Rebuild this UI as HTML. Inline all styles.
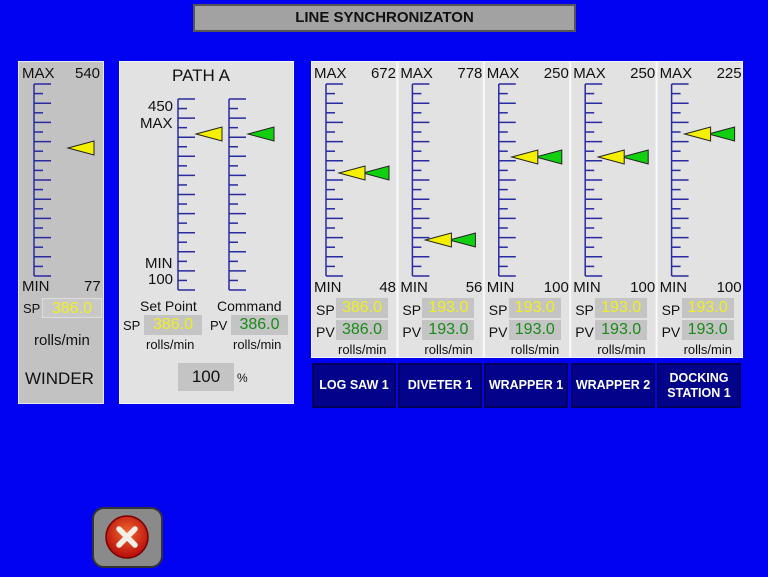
<!DOCTYPE html>
<html><head><meta charset="utf-8"><style>
*{margin:0;padding:0;box-sizing:border-box}
body{width:768px;height:577px;background:#0202f2;position:relative;overflow:hidden;font-family:"Liberation Sans",Arial,sans-serif;color:#111}
.a{position:absolute}
.t{position:absolute;font-size:15px;line-height:16px;white-space:nowrap}
.box{position:absolute;background:#c4c4c4;font-size:16px;line-height:20px;text-align:center;height:20px}
.y{color:#f0f020}.g{color:#1a8a1a}
.btn{position:absolute;top:363px;height:45px;width:84px;background:#02028a;border:2px solid #00005a;color:#fff;font-weight:bold;font-size:12.5px;display:flex;align-items:center;justify-content:center;text-align:center;line-height:15px}
</style></head><body>
<div class="a" style="left:193px;top:4px;width:383px;height:28px;background:#a2a2a2;border:2px solid #555;text-align:center;font-weight:bold;font-size:15px;line-height:24px">LINE SYNCHRONIZATON</div>

<div class="a" style="left:18px;top:61px;width:86px;height:343px;background:#c2c2c2;border:1px solid #e8e8e8"></div>
<div class="a" style="left:119px;top:61px;width:175px;height:343px;background:#e2e2e2;border:1px solid #f4f4f4"></div>
<div class="a" style="left:311px;top:61px;width:432px;height:297px;background:#e2e2e2;border:1px solid #f4f4f4"></div>

<svg class="a" style="left:0;top:0" width="768" height="577" id="s"></svg>

<div class="t" style="left:22px;top:66px">MAX</div><div class="t" style="left:75px;top:66px">540</div>
<div class="t" style="left:22px;top:279px">MIN</div><div class="t" style="left:84px;top:279px">77</div>
<div class="t" style="left:23px;top:301px;font-size:13px">SP</div>
<div class="box y" style="left:42px;top:298px;width:60px;background:#c8c8c8;border:1px solid #ddd">386.0</div>
<div class="t" style="left:34px;top:333px">rolls/min</div>
<div class="t" style="left:25px;top:370px;font-size:17px;line-height:18px">WINDER</div>

<div class="t" style="left:172px;top:67px;font-size:17px;line-height:18px">PATH A</div>
<div class="t" style="left:148px;top:99px">450</div>
<div class="t" style="left:140px;top:116px">MAX</div>
<div class="t" style="left:145px;top:256px">MIN</div>
<div class="t" style="left:148px;top:272px">100</div>
<div class="t" style="left:140px;top:298px;font-size:14px">Set Point</div>
<div class="t" style="left:217px;top:298px;font-size:14px">Command</div>
<div class="t" style="left:123px;top:318px;font-size:13px">SP</div>
<div class="box y" style="left:144px;top:315px;width:58px">386.0</div>
<div class="t" style="left:210px;top:318px;font-size:13px">PV</div>
<div class="box g" style="left:231px;top:315px;width:57px">386.0</div>
<div class="t" style="left:146px;top:337px;font-size:13px">rolls/min</div>
<div class="t" style="left:233px;top:337px;font-size:13px">rolls/min</div>
<div class="box" style="left:178px;top:363px;width:56px;height:28px;line-height:28px;font-size:17px">100</div>
<div class="t" style="left:237px;top:370px;font-size:12px">%</div>

<div id="cols"></div>

<div class="btn" style="left:312px">LOG SAW 1</div>
<div class="btn" style="left:398px">DIVETER 1</div>
<div class="btn" style="left:484px">WRAPPER 1</div>
<div class="btn" style="left:571px">WRAPPER 2</div>
<div class="btn" style="left:657px">DOCKING<br>STATION 1</div>

<div class="a" style="left:92px;top:507px;width:71px;height:61px;background:#8a8a8a;border:2px solid #333;border-radius:12px"></div>
<svg class="a" style="left:104px;top:514px" width="46" height="46">
<defs><radialGradient id="r" cx="50%" cy="40%" r="60%"><stop offset="0" stop-color="#f06a30"/><stop offset="1" stop-color="#b80a0a"/></radialGradient></defs>
<circle cx="23" cy="23" r="21" fill="url(#r)" stroke="#700" stroke-width="1.5"/>
<path d="M15 15L31 31M31 15L15 31" stroke="#f4f0e8" stroke-width="5.5" stroke-linecap="round"/>
</svg>

<script>
var s=document.getElementById('s'),h='';
function scale(x,y0,y1){h+='<line x1="'+x+'" y1="'+y0+'" x2="'+x+'" y2="'+y1+'" stroke="#2a2aa0" stroke-width="1.5"/>';
for(var i=0;i<=20;i++){var y=y0+(y1-y0)*i/20;h+='<line x1="'+x+'" y1="'+y+'" x2="'+(x+(i%2?9:17))+'" y2="'+y+'" stroke="#2a2aa0" stroke-width="1.5"/>';}}
function arr(x,y,c){h+='<polygon points="'+x+','+y+' '+(x+26)+','+(y-7)+' '+(x+26)+','+(y+7)+'" fill="'+c+'" stroke="#222" stroke-width="1"/>';}
scale(34,84,276);arr(68,148,'#f4f000');
scale(178,99,290);scale(229,99,290);arr(196,134,'#f4f000');arr(248,134,'#10d010');
var cols=[[672,48,'386.0','386.0',173],[778,56,'193.0','193.0',240],[250,100,'193.0','193.0',157],[250,100,'193.0','193.0',157],[225,100,'193.0','193.0',134]];
var d='';
cols.forEach(function(c,i){var x=311+i*86.4;
if(i>0)h+='<line x1="'+x+'" y1="62" x2="'+x+'" y2="357" stroke="#fafafa" stroke-width="2"/>';
scale(x+15,84,276);arr(x+52,c[4],'#10d010');arr(x+28,c[4],'#f4f000');
d+='<div class="t" style="left:'+(x+3)+'px;top:66px">MAX</div><div class="t" style="left:'+(x+55)+'px;top:66px;width:30px;text-align:right">'+c[0]+'</div>';
d+='<div class="t" style="left:'+(x+3)+'px;top:280px">MIN</div><div class="t" style="left:'+(x+55)+'px;top:280px;width:30px;text-align:right">'+c[1]+'</div>';
d+='<div class="t" style="left:'+(x+5)+'px;top:302px;font-size:14px">SP</div><div class="box y" style="left:'+(x+25)+'px;top:298px;width:52px">'+c[2]+'</div>';
d+='<div class="t" style="left:'+(x+5)+'px;top:324px;font-size:14px">PV</div><div class="box g" style="left:'+(x+25)+'px;top:320px;width:52px">'+c[3]+'</div>';
d+='<div class="t" style="left:'+(x+27)+'px;top:342px;font-size:13px">rolls/min</div>';});
s.innerHTML=h;document.getElementById('cols').innerHTML=d;
</script>
</body></html>
